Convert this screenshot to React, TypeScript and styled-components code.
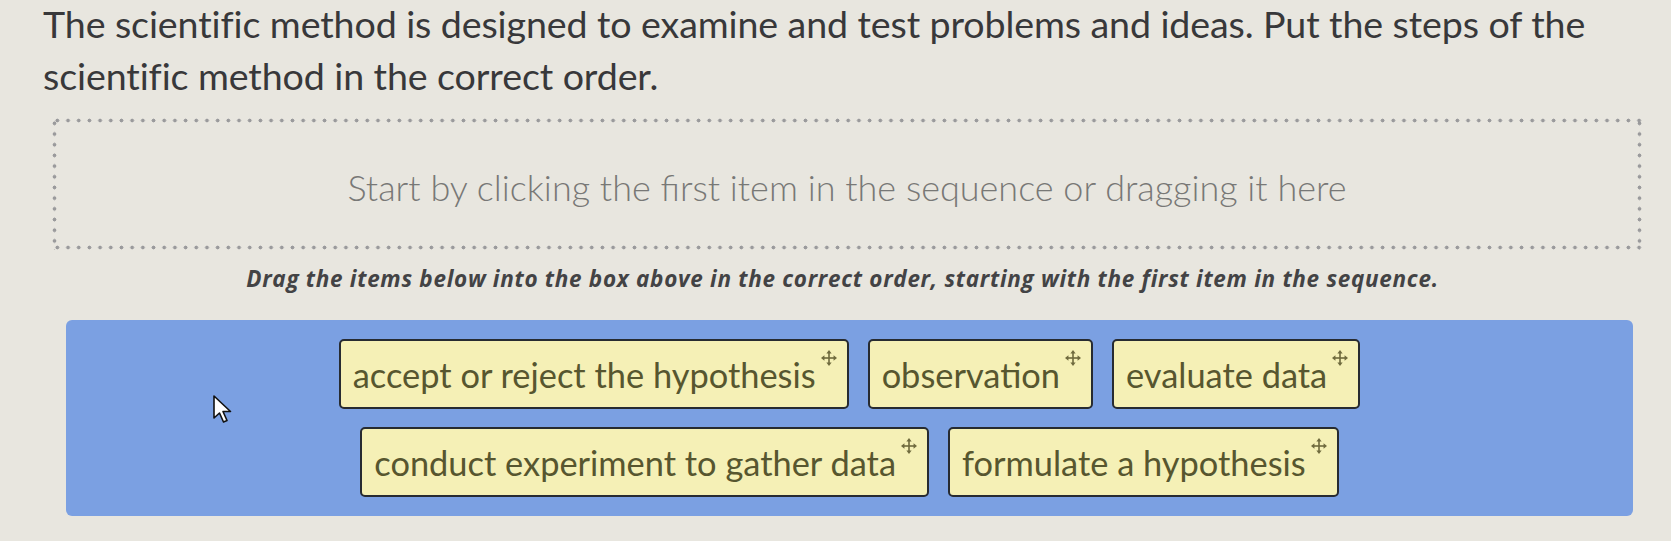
import React from "react";
import styled, { createGlobalStyle } from "styled-components";

const Global = createGlobalStyle`
  html, body { margin: 0; padding: 0; background: #e8e6df; }
  body { font-family: "Lato", "Noto Sans", sans-serif; }
`;

const Page = styled.div`
  width: 1671px;
  height: 541px;
  box-sizing: border-box;
  padding: 0 29px 0 43px;
  background: #e8e6df;
  overflow: hidden;
`;

const Title = styled.h1`
  margin: -2px 0 0 0;
  font-family: "Lato", sans-serif;
  font-weight: 400;
  font-size: 37.6px;
  line-height: 52px;
  color: #38383a;
  letter-spacing: -0.1px;
  white-space: nowrap;
`;

const DropZone = styled.div`
  margin: 16px 0 0 9px;
  height: 132px;
  display: flex;
  align-items: center;
  justify-content: center;
  background-image:
    radial-gradient(circle, #9a9a9c 1.7px, transparent 2.2px),
    radial-gradient(circle, #9a9a9c 1.7px, transparent 2.2px),
    radial-gradient(circle, #9a9a9c 1.7px, transparent 2.2px),
    radial-gradient(circle, #9a9a9c 1.7px, transparent 2.2px);
  background-size: 10.7px 5px, 10.7px 5px, 5px 10.7px, 5px 10.7px;
  background-position: 0 0, 0 100%, 0 0, 100% 0;
  background-repeat: repeat-x, repeat-x, repeat-y, repeat-y;
`;

const Placeholder = styled.span`
  font-family: "Lato", sans-serif;
  font-size: 36px;
  color: #787876;
  font-weight: 300;
  margin-top: 6px;
`;

const Instruction = styled.p`
  margin: 14px 0 0 0;
  text-align: center;
  font-family: "Open Sans", sans-serif;
  font-weight: 700;
  font-style: italic;
  font-size: 22.5px;
  line-height: 30px;
  color: #434345;
  letter-spacing: 0.7px;
  white-space: nowrap;
`;

const Panel = styled.div`
  position: relative;
  margin: 26px 9px 0 23px;
  background: #7ba0e2;
  border-radius: 6px;
  padding: 19px 0 19px;
  display: flex;
  flex-direction: column;
  align-items: center;
  gap: 18px;
`;

const Row = styled.div`
  display: flex;
  gap: 19px;
  justify-content: center;
`;

const Chip = styled.div`
  position: relative;
  height: 70px;
  box-sizing: border-box;
  border: 2.5px solid #272b31;
  border-radius: 5px;
  background: #f5f0b6;
  display: flex;
  align-items: center;
  padding: 0 31px 0 12px;
  font-family: "Lato", sans-serif;
  font-size: 34.4px;
  color: #57562f;
  white-space: nowrap;
`;

const MoveIcon = styled.svg`
  position: absolute;
  top: 9px;
  right: 10px;
  width: 16px;
  height: 16px;
`;

const Cursor = styled.svg`
  position: absolute;
  left: 146px;
  top: 74px;
  width: 22px;
  height: 30px;
`;

const Move = () => (
  <MoveIcon viewBox="0 0 14 14">
    <g fill="#6f6a3e" stroke="none">
      <rect x="6.3" y="2" width="1.4" height="10" />
      <rect x="2" y="6.3" width="10" height="1.4" />
      <polygon points="7,0 9.3,3 4.7,3" />
      <polygon points="7,14 9.3,11 4.7,11" />
      <polygon points="0,7 3,4.7 3,9.3" />
      <polygon points="14,7 11,4.7 11,9.3" />
    </g>
  </MoveIcon>
);

const items1 = ["accept or reject the hypothesis", "observation", "evaluate data"];
const items2 = ["conduct experiment to gather data", "formulate a hypothesis"];

export default function App() {
  return (
    <>
      <Global />
      <Page>
        <Title>
          The scientific method is designed to examine and test problems and ideas. Put the steps of the
          <br />
          scientific method in the correct order.
        </Title>
        <DropZone>
          <Placeholder>Start by clicking the first item in the sequence or dragging it here</Placeholder>
        </DropZone>
        <Instruction>
          Drag the items below into the box above in the correct order, starting with the first item in the sequence.
        </Instruction>
        <Panel>
          <Row>
            {items1.map((t) => (
              <Chip key={t}>
                {t}
                <Move />
              </Chip>
            ))}
          </Row>
          <Row>
            {items2.map((t) => (
              <Chip key={t}>
                {t}
                <Move />
              </Chip>
            ))}
          </Row>
          <Cursor viewBox="0 0 22 30">
            <path
              d="M2 2 L2 24 L7.5 19 L11.5 28 L15 26.5 L11 17.5 L18.5 17.5 Z"
              fill="#ffffff"
              stroke="#111"
              strokeWidth="1.6"
              strokeLinejoin="round"
            />
          </Cursor>
        </Panel>
      </Page>
    </>
  );
}
